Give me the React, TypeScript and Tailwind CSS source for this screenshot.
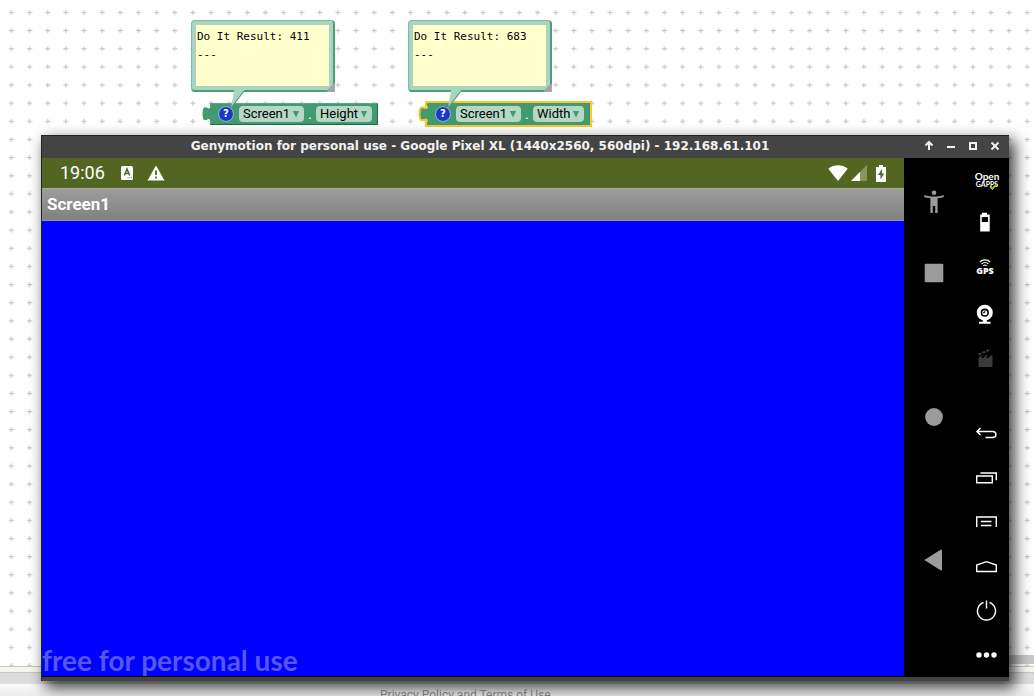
import type { ReactNode } from "react";

function DotGrid() {
  return (
    <svg className="absolute inset-0 h-full w-full" aria-hidden="true">
      <defs>
        <pattern id="grid" x="2" y="3.3" width="18.14" height="18.14" patternUnits="userSpaceOnUse">
          <path d="M7 9.2h5M9.4 6.8v5" stroke="#c4c4c4" strokeWidth="1" />
        </pattern>
      </defs>
      <rect width="100%" height="100%" fill="url(#grid)" />
    </svg>
  );
}

function Picker({ label, value }: { label: string; value: string }) {
  return (
    <label className="flex h-4 items-center rounded bg-[#b4d7c6] px-1">
      <select
        aria-label={label}
        defaultValue={value}
        className="appearance-none bg-transparent font-['Roboto',sans-serif] text-[13px] leading-4 text-black outline-none"
      >
        <option>{value}</option>
      </select>
      <svg width="8" height="8" viewBox="0 0 8 8" className="ml-px" aria-hidden="true">
        <path d="M0.8 1h6.4L4 7.6z" fill="#439a70" />
      </svg>
    </label>
  );
}

function PropertyBlock({
  place,
  result,
  property,
  selected = false,
}: {
  place: string;
  result: string;
  property: string;
  selected?: boolean;
}) {
  return (
    <div className={`absolute ${place}`}>
      <div className="h-[72px] w-36 rounded border border-[#7fbb9d] border-r-2 border-b-2 border-r-[#4f9c78] border-b-[#4f9c78] bg-[#a9d5c0] p-1">
        <textarea
          aria-label={`${property} comment`}
          readOnly
          value={`Do It Result: ${result}\n---`}
          className="block h-full w-full resize-none overflow-hidden bg-[#ffffcc] px-px pt-[3px] font-['DejaVu_Sans_Mono',monospace] text-[11px] leading-[18px] text-black outline-none"
        />
      </div>
      <svg width="9" height="9" viewBox="0 0 9 9" className="absolute top-[63px] left-[135px]" aria-hidden="true">
        <path d="M0 9L9 0v9z" fill="#b5b5b5" />
        <path d="M0.5 9L9 0.5M3.5 9L9 3.5M6.5 9L9 6.5" stroke="#858585" strokeWidth="1" />
      </svg>
      <div
        className={`mt-[11px] ml-[19px] flex h-[22px] w-max items-center bg-[#439a70] pr-[5px] pl-2 ${
          selected
            ? "border border-[#439a70] outline-2 outline-[#fcc72b]"
            : "border border-[#57a981] border-r-[#236b4a] border-b-[#236b4a]"
        }`}
      >
        <button
          aria-label="Show comment"
          className="mr-1.5 flex h-3.5 w-3.5 items-center justify-center rounded-full bg-[#1a37cc] font-['DejaVu_Sans',sans-serif] text-[10px] leading-3 font-bold text-white outline-1 outline-[#8fa9dd]"
        >
          ?
        </button>
        <Picker label="Component" value="Screen1" />
        <span className="w-3 text-center font-['Roboto',sans-serif] text-[15px] leading-4 text-white">.</span>
        <Picker label="Property" value={property} />
      </div>
      <svg width="56" height="42" viewBox="0 0 56 42" className="absolute top-[68px] left-[10px]" aria-hidden="true">
        <path
          d="M10 19.5C6 22 7.5 18.5 3 19.5C1 21 1 30.5 3 32C7.5 33 6 29 10 32.5z"
          fill="#439a70"
        />
        {selected && (
          <path
            d="M9 18C9 22 7 18.5 3 19.5C1 21 1 30.5 3 32C7 33 9 29 9 34"
            fill="none"
            stroke="#fcc72b"
            strokeWidth="2"
          />
        )}
        <path d="M33 0H43V3L30 20L33 3z" fill="#a9d5c0" />
        <path d="M43 3L30 20" stroke="#4f9c78" strokeWidth="1.2" />
      </svg>
    </div>
  );
}

function TitleBar() {
  return (
    <header className="flex h-[22px] items-start bg-[#444444] text-[#f2f2f2]">
      <h1 className="flex-1 text-center font-['DejaVu_Sans',sans-serif] text-xs leading-5 font-bold whitespace-nowrap">
        Genymotion for personal use - Google Pixel XL (1440x2560, 560dpi) - 192.168.61.101
      </h1>
      <div className="mr-[3px] flex items-center">
        <WindowButton label="Keep above">
          <path d="M6 10V2M2.5 5.5L6 2L9.5 5.5" />
        </WindowButton>
        <WindowButton label="Minimize">
          <path d="M2 7H10" />
        </WindowButton>
        <WindowButton label="Maximize">
          <path d="M3 3H9V9H3z" />
        </WindowButton>
        <WindowButton label="Close">
          <path d="M2.5 2.5L9.5 9.5M9.5 2.5L2.5 9.5" />
        </WindowButton>
      </div>
    </header>
  );
}

function WindowButton({ label, children }: { label: string; children: ReactNode }) {
  return (
    <button aria-label={label} className="flex h-5 w-[22px] items-center justify-center">
      <svg width="12" height="12" viewBox="0 0 12 12" fill="none" stroke="currentColor" strokeWidth="2">
        {children}
      </svg>
    </button>
  );
}

function StatusBar() {
  return (
    <div className="flex h-[30px] items-center bg-[#526622] px-[18px] text-white">
      <span className="font-['Roboto',sans-serif] text-lg leading-6">19:06</span>
      <svg width="12" height="14" viewBox="0 0 12 14" className="ml-4" aria-hidden="true">
        <rect width="12" height="14" rx="1.5" fill="#fff" />
        <path d="M3.3 9.5L6 3L8.7 9.5M4.3 7.5h3.4" fill="none" stroke="#526622" strokeWidth="1.5" />
        <path d="M6.5 11.7h1M8.3 11.7h1M10 11.7h1" stroke="#526622" strokeWidth="0.8" />
      </svg>
      <svg width="18" height="16" viewBox="0 0 18 16" className="ml-3.5" aria-hidden="true">
        <path d="M9 0.5L17.5 15.5H0.5z" fill="#fff" />
        <path d="M9 5.5v4.6M9 11.4v2" stroke="#526622" strokeWidth="1.8" />
      </svg>
      <svg width="20" height="16" viewBox="0 0 20 16" className="ml-auto" aria-hidden="true">
        <path d="M10 16L0.3 3.8C5.8-0.8 14.2-0.8 19.7 3.8z" fill="#fff" />
      </svg>
      <svg width="16" height="16" viewBox="0 0 16 16" className="ml-[3px]" aria-hidden="true">
        <path d="M0 16L16 0v16z" fill="#89975f" />
        <path d="M0 16L9 7v9z" fill="#fff" />
      </svg>
      <svg width="10" height="17" viewBox="0 0 10 17" className="ml-[9px]" aria-hidden="true">
        <path d="M3 0h4v2h3v15H0V2h3z" fill="#fff" />
        <path d="M6 4L2 10h2.5v4.5L8.2 8.5H6z" fill="#526622" />
      </svg>
    </div>
  );
}

function NavColumn() {
  return (
    <nav aria-label="Device navigation" className="flex w-[60px] flex-col items-center text-[#9b9b9b]">
      <button aria-label="Accessibility" className="flex h-[88px] items-center">
        <svg width="20" height="24" viewBox="0 0 20 24" fill="currentColor">
          <circle cx="10" cy="2.7" r="2.3" />
          <path d="M0.3 5C6.5 7 13.5 7 19.7 5V7.2L13.6 8.3V23h-2.4v-7H8.8v7H6.4V8.3L0.3 7.2z" />
        </svg>
      </button>
      <div className="flex flex-1 flex-col justify-between pt-[7px] pb-[96px]">
        <button aria-label="Overview" className="flex h-10 items-center">
          <svg width="20" height="20" viewBox="0 0 20 20" fill="currentColor">
            <rect x="0.7" y="0.7" width="18.6" height="18.6" rx="1" />
          </svg>
        </button>
        <button aria-label="Home" className="flex h-10 items-center">
          <svg width="20" height="20" viewBox="0 0 20 20" fill="currentColor">
            <circle cx="10" cy="10" r="8.9" />
          </svg>
        </button>
        <button aria-label="Back" className="flex h-10 items-center">
          <svg width="20" height="22" viewBox="0 0 20 22" fill="currentColor">
            <path d="M0.3 11L16.5 0.8Q18 0.3 18 1.5V20.5Q18 21.8 16.5 21.2z" />
          </svg>
        </button>
      </div>
    </nav>
  );
}

function Tool({ label, children }: { label: string; children: ReactNode }) {
  return (
    <button aria-label={label} className="flex min-h-0 flex-1 items-center justify-center">
      <svg width="24" height="24" viewBox="0 0 24 24" fill="none" stroke="#fff" strokeWidth="1.4">
        {children}
      </svg>
    </button>
  );
}

function Toolbar() {
  return (
    <div role="toolbar" aria-label="Emulator tools" className="flex w-[45px] flex-col justify-between pr-px">
      <div className="flex h-[222px] flex-col">
        <button
          aria-label="Open GApps"
          className="relative flex flex-1 flex-col items-center justify-center pl-0.5 font-['Lato',sans-serif] font-bold text-white"
        >
          <span className="text-[10px] leading-2">Open</span>
          <span className="text-[7px] leading-2">GAPPS</span>
          <svg width="9" height="7" viewBox="0 0 9 7" className="absolute right-2.5 bottom-3" fill="none">
            <path d="M1 3.5L3.3 5.7L8 1" stroke="#a8d817" strokeWidth="1.7" />
          </svg>
        </button>
        <Tool label="Battery">
          <path d="M6.200 3.500h1.800V1.800h5v1.700h2.700V20.500H6.200z" fill="#fff" stroke="none" />
          <path d="M7.800 6h6.200v5H7.800z" fill="#000" stroke="none" />
        </Tool>
        <button
          aria-label="GPS"
          className="flex flex-1 flex-col items-center justify-center pr-0.5 pb-1 font-['Open_Sans',sans-serif] text-[9px] leading-2 font-extrabold text-white"
        >
          <svg width="12" height="8" viewBox="0 0 12 8" fill="none" stroke="#fff" strokeWidth="1.2">
            <path d="M0.8 3.2C3.5 0.2 8.5 0.2 11.2 3.2M2.6 5C4.5 3 7.5 3 9.4 5M4.4 6.8C5.3 5.7 6.7 5.7 7.6 6.8" />
          </svg>
          GPS
        </button>
        <Tool label="Camera">
          <circle cx="10.8" cy="9.700" r="8" fill="#fff" stroke="none" />
          <circle cx="10.8" cy="9.700" r="3.300" stroke="#000" strokeWidth="1.600" />
          <path d="M10.8 7.700v2H9" stroke="#000" strokeWidth="1" />
          <path d="M8.800 17h4v1.700h3.800v2H5v-2h3.800z" fill="#fff" stroke="none" />
        </Tool>
        <Tool label="Screencast">
          <path d="M4.500 13h14v8h-14zM4.500 12.500l2-3h2l-1.500 2.500h2.500l2-2.500h2l-1.500 2.500h2.500l2-2.500h2v3.500h-14z" fill="#3b3b3b" stroke="none" />
          <path d="M4.500 8.500L16.500 3.500" stroke="#3b3b3b" strokeWidth="2" strokeDasharray="3 1.2" />
        </Tool>
      </div>
      <div className="flex h-[265px] flex-col">
        <Tool label="Back">
          <path d="M6.5 7L3 10.5L6.5 14M3 10.5H18.5C23 10.5 23 16.5 18.5 16.5H11.5" strokeWidth="1.5" />
        </Tool>
        <Tool label="Recent apps">
          <path d="M2.700 11h15.600v6.800H2.700zM6.500 8h15.800v7.300" />
        </Tool>
        <Tool label="Menu">
          <path d="M2.700 18V8h19.600v10M7 12.500h10.500M7 16.500h10.500" />
        </Tool>
        <Tool label="Home">
          <path d="M2.700 17.500V11L12.500 7.700L22.300 11V17.500z" />
        </Tool>
        <Tool label="Power">
          <path d="M9.500 4.500A9 9 0 1 0 15.500 4.500M12.500 2.500v8" />
        </Tool>
        <Tool label="More">
          <g fill="#fff" stroke="none">
            <circle cx="5" cy="13" r="2.7" />
            <circle cx="12.5" cy="13" r="2.7" />
            <circle cx="20" cy="13" r="2.7" />
          </g>
        </Tool>
      </div>
    </div>
  );
}

function EmulatorWindow() {
  return (
    <section className="absolute top-[135px] right-[25px] bottom-[15px] left-[41px] flex flex-col border-t border-l border-[#222] bg-black shadow-[5px_6px_14px_1px_rgba(0,0,0,0.75)]">
      <TitleBar />
      <div className="flex min-h-0 flex-1">
        <main className="flex flex-1 flex-col">
          <StatusBar />
          <h2 className="h-[33px] border-y border-t-[#a8a8a8] border-b-[#969696] bg-linear-to-b from-[#9d9d9d] to-[#808080] pl-[5px] font-['Roboto',sans-serif] text-[17px] leading-[30px] font-bold text-white">
            Screen1
          </h2>
          <div className="flex flex-1 items-end bg-[#0000ff]">
            <p className="font-['Lato',sans-serif] text-[28px] leading-8 font-bold text-[#5656f0]">
              free for personal use
            </p>
          </div>
        </main>
        <NavColumn />
        <Toolbar />
      </div>
      <div className="h-[5px] border-t border-black bg-[#444444]" />
    </section>
  );
}

export default function App() {
  return (
    <div className="relative flex h-screen flex-col overflow-hidden bg-white">
      <div className="relative flex flex-1 flex-col justify-end overflow-hidden">
        <DotGrid />
        <div className="mb-0.5 ml-[50%] h-[9px] bg-[#c8c8c8]" />
        <PropertyBlock place="top-5 left-[191px]" result="411" property="Height" />
        <PropertyBlock place="top-5 left-[408px]" result="683" property="Width" selected />
      </div>
      <div className="h-[7px] border-y border-[#c9c9c5] bg-[#f7f7f2]" />
      <div className="h-[11px] bg-[#dddddd]" />
      <footer className="h-3 bg-linear-to-b from-[#fafafa] to-[#ededed] pt-1 pl-[380px]">
        <a href="#terms" className="relative z-10 block w-max font-['Roboto',sans-serif] text-xs leading-[14px] text-[#777]">
          Privacy Policy and Terms of Use
        </a>
      </footer>
      <EmulatorWindow />
    </div>
  );
}
